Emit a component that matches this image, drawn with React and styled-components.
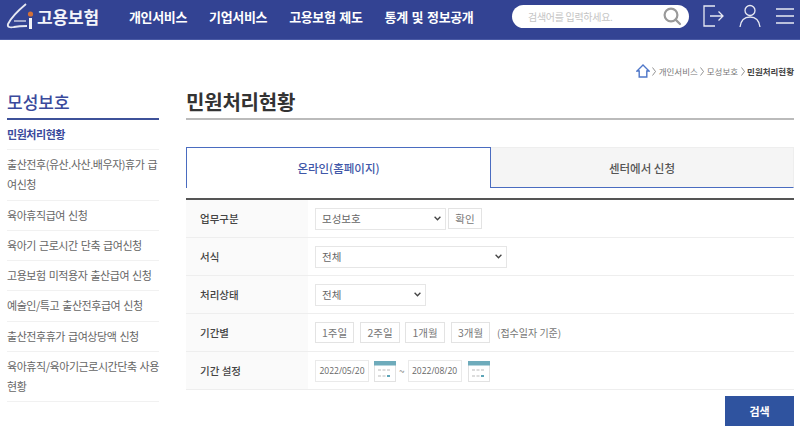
import React from "react";
import styled, { createGlobalStyle } from "styled-components";

const Global = createGlobalStyle`
  html, body { margin: 0; padding: 0; background: #fff; }
  body { font-family: "Noto Sans CJK KR", "Noto Sans", sans-serif; color: #444; overflow: hidden; }
  * { box-sizing: border-box; }
`;

const chevron = "data:image/svg+xml;utf8,<svg xmlns='http://www.w3.org/2000/svg' width='7' height='5' viewBox='0 0 7 5'><path d='M0.6 0.8 L3.5 3.8 L6.4 0.8' fill='none' stroke='%23444' stroke-width='1.3'/></svg>";

const Page = styled.div`width: 800px; height: 440px; overflow: hidden;`;
const Header = styled.header`
  height: 40px; background: #334393; border-bottom: 1px solid #4a5aa5;
  display: flex; align-items: center; padding-left: 6px;
`;
const Logo = styled.div`display: flex; align-items: center; width: 123px; color: #f4f5fa; font-size: 17px; font-weight: 700; gap: 2px; margin-top: -6px; letter-spacing: -0.1px;`;
const Nav = styled.nav`display: flex; gap: 22px; width: 383px; margin-top: -6px;`;
const NavItem = styled.a`color: #fff; font-size: 13px; font-weight: 700; white-space: nowrap; letter-spacing: -0.35px; word-spacing: 1.2px;`;
const Search = styled.div`
  width: 177px; height: 23px; border-radius: 12px; background: #fff; margin-top: -7px;
  display: flex; align-items: center; justify-content: space-between; padding: 0 7px 0 16px;
  color: #c4c4c4; font-size: 10px; letter-spacing: -0.3px;
`;
const HeaderIcons = styled.div`display: flex; align-items: center; gap: 15px; margin-left: 14px; margin-top: -7px;`;

const Crumbs = styled.div`
  display: flex; justify-content: flex-end; align-items: center; height: 20px; margin-top: 21px; padding-right: 6px;
  font-size: 8.5px; color: #777; gap: 2.5px;
`;
const CrumbNow = styled.strong`color: #444; font-weight: 700;`;

const Body = styled.div`display: flex; gap: 27px; padding: 0 6px 0 7px; margin-top: 8px;`;
const Side = styled.aside`width: 152px; flex: none;`;
const SideTitle = styled.h2`
  margin: 0; height: 31px; border-bottom: 2px solid #3e5199; color: #3a4a9c;
  font-size: 17px; font-weight: 500; line-height: 26px;
`;
const SideItem = styled.a`
  display: block; padding: 4px 0 5.3px; font-size: 11px; line-height: 20px; border-bottom: 1px solid #f1f1f1;
  letter-spacing: -0.45px; word-spacing: 1px; word-break: break-all;
  color: ${p => (p.$active ? "#3a4a9c" : "#666")}; font-weight: ${p => (p.$active ? 700 : 400)};
`;
const Main = styled.main`flex: 1; min-width: 0;`;
const Title = styled.h1`
  margin: 0; height: 31px; border-bottom: 2px solid #bbb; color: #333;
  font-size: 20px; font-weight: 700; line-height: 26px; letter-spacing: -0.2px;
`;
const Tabs = styled.div`display: flex; margin-top: 27px; height: 41px;`;
const Tab = styled.div`
  flex: none; width: ${p => (p.$active ? "305px" : "303px")};
  display: flex; align-items: center; justify-content: center; font-size: 11.5px; font-weight: 500;
  ${p => p.$active
    ? "color:#3f57a8; border:1px solid #4a6cc0; border-bottom:0; background:#fff;"
    : "color:#555; background:#f5f5f5; border-top:1px solid #eee; border-right:1px solid #eee; border-bottom:1px solid #4a6cc0;"}
`;
const Form = styled.div`margin-top: 10px; border-top: 2px solid #555;`;
const Row = styled.div`display: flex; height: 38px; border-bottom: 1px solid #eee; align-items: stretch;`;
const Head = styled.div`
  width: 122px; background: #fafafa; padding-left: 14px; display: flex; align-items: center;
  font-size: 10.5px; font-weight: 500; color: #444;
`;
const Cell = styled.div`flex: 1; display: flex; align-items: center; padding-left: 7px; font-size: 10px; color: #666;`;
const Select = styled.select`
  appearance: none; width: ${p => p.$w}px; height: 22px; border: 1px solid #e6e6e6; color: #666;
  background: #fff url("${chevron}") no-repeat right 4px center;
  font-family: inherit; font-size: 10.5px; padding: 0 1px 0 6px;
`;
const Btn = styled.button`
  height: 21px; width: ${p => p.$w}px; margin-left: ${p => p.$ml ?? 0}px; padding: 0; border: 1px solid #e3e3e3; background: #fff;
  color: #777; font-family: inherit; font-size: 10.5px;
`;
const Note = styled.span`margin-left: 7px; font-size: 10px; color: #777;`;
const DateBox = styled.input`
  width: 54px; height: 22px; border: 1px solid #eaeaea; padding: 0; text-align: center; color: #666;
  font-family: "Open Sans", sans-serif; font-size: 8.5px; background: #fff;
`;
const Tilde = styled.span`margin: 0 3px; color: #888; font-size: 10px;`;
const Spacer = styled.span`width: ${p => p.$w}px; flex: none;`;
const Actions = styled.div`display: flex; justify-content: flex-end; margin-top: 6px;`;
const SearchBtn = styled.button`
  width: 69px; height: 30px; border: 0; background: #2f539f; color: #fff;
  font-family: inherit; font-size: 11px; font-weight: 700;
`;

const LogoMark = () => (
  <svg width="29" height="28" viewBox="0 0 29 28" fill="none">
    <path d="M20 1 C14 6 6 13 2 21 C1 24 4 25 8 24 C13 23 17 23 21 23" stroke="#e6e8f2" strokeWidth="1.8" />
    <path d="M8 18 C12 18 15 18 20 18" stroke="#e6e8f2" strokeWidth="1.2" />
    <circle cx="24.5" cy="11" r="2.6" fill="#d2703a" />
    <rect x="23" y="15" width="3" height="11" fill="#f2f2f6" />
  </svg>
);
const Magnifier = () => (
  <svg width="20" height="20" viewBox="0 0 20 20" fill="none" stroke="#9a9a9a" strokeWidth="2.2">
    <circle cx="9" cy="9" r="6.4" /><path d="M13.6 13.6 L18 18" strokeLinecap="round" />
  </svg>
);
const ExitIcon = () => (
  <svg width="21" height="22" viewBox="0 0 21 22" fill="none" stroke="#e8eaf3" strokeWidth="1.3">
    <path d="M12 1 H1 V21 H12" /><path d="M7 11 H20 M15.5 6.5 L20 11 L15.5 15.5" />
  </svg>
);
const UserIcon = () => (
  <svg width="22" height="24" viewBox="0 0 22 24" fill="none" stroke="#e8eaf3" strokeWidth="1.3">
    <circle cx="11" cy="6.5" r="5" /><path d="M1 23 C2 15 6 13 11 13 C16 13 20 15 21 23" />
  </svg>
);
const MenuIcon = () => (
  <svg width="18" height="18" viewBox="0 0 18 18" stroke="#e8eaf3" strokeWidth="1.3"><path d="M0 2 H18 M0 9 H18 M0 16 H18" /></svg>
);
const HomeIcon = () => (
  <svg width="14" height="14" viewBox="0 0 14 14" fill="none" stroke="#4f77c9" strokeWidth="1.4">
    <path d="M1 7 L7 1 L13 7 H10.8 V13 H3.2 V7 Z" />
  </svg>
);
const CrumbSep = () => (
  <svg width="4" height="9" viewBox="0 0 4 9" fill="none" stroke="#777" strokeWidth="0.8"><path d="M0.5 0.5 L3.5 4.5 L0.5 8.5" /></svg>
);
const CalIcon = () => (
  <svg width="22" height="22" viewBox="0 0 22 22" style={{ flex: "none" }}>
    <rect x="0.5" y="1.5" width="21" height="20" fill="#fff" stroke="#e2e2e2" />
    <rect y="1" width="22" height="4.5" fill="#6eabbb" />
    {[4, 8.5, 13].map(x => [9, 15].map(y => <rect key={x + "-" + y} x={x} y={y} width="3" height="2" fill="#dcdcdc" />))}
    <rect x="13" y="15" width="3" height="2" fill="#5ea5b8" />
  </svg>
);

const sideItems = [
  "출산전후(유산.사산.배우자)휴가 급여신청",
  "육아휴직급여 신청",
  "육아기 근로시간 단축 급여신청",
  "고용보험 미적용자 출산급여 신청",
  "예술인/특고 출산전후급여 신청",
  "출산전후휴가 급여상당액 신청",
  "육아휴직/육아기근로시간단축 사용현황",
];

export default function App() {
  return (
    <Page>
      <Global />
      <Header>
        <Logo><LogoMark />고용보험</Logo>
        <Nav>
          {["개인서비스", "기업서비스", "고용보험 제도", "통계 및 정보공개"].map(n => <NavItem key={n}>{n}</NavItem>)}
        </Nav>
        <Search>검색어를 입력하세요.<Magnifier /></Search>
        <HeaderIcons><ExitIcon /><UserIcon /><MenuIcon /></HeaderIcons>
      </Header>
      <Crumbs>
        <HomeIcon /><CrumbSep />개인서비스<CrumbSep />모성보호<CrumbSep /><CrumbNow>민원처리현황</CrumbNow>
      </Crumbs>
      <Body>
        <Side>
          <SideTitle>모성보호</SideTitle>
          <SideItem $active>민원처리현황</SideItem>
          {sideItems.map(s => <SideItem key={s}>{s}</SideItem>)}
        </Side>
        <Main>
          <Title>민원처리현황</Title>
          <Tabs>
            <Tab $active>온라인(홈페이지)</Tab>
            <Tab>센터에서 신청</Tab>
          </Tabs>
          <Form>
            <Row>
              <Head>업무구분</Head>
              <Cell><Select $w={131}><option>모성보호</option></Select><Btn $w={34} $ml={2}>확인</Btn></Cell>
            </Row>
            <Row>
              <Head>서식</Head>
              <Cell><Select $w={192}><option>전체</option></Select></Cell>
            </Row>
            <Row>
              <Head>처리상태</Head>
              <Cell><Select $w={111}><option>전체</option></Select></Cell>
            </Row>
            <Row>
              <Head>기간별</Head>
              <Cell>
                <Btn $w={39}>1주일</Btn><Btn $w={40} $ml={6}>2주일</Btn><Btn $w={40} $ml={5}>1개월</Btn><Btn $w={39} $ml={6}>3개월</Btn>
                <Note>(접수일자 기준)</Note>
              </Cell>
            </Row>
            <Row>
              <Head>기간 설정</Head>
              <Cell>
                <DateBox readOnly value="2022/05/20" /><Spacer $w={5} /><CalIcon /><Tilde>~</Tilde>
                <DateBox readOnly value="2022/08/20" /><Spacer $w={6} /><CalIcon />
              </Cell>
            </Row>
          </Form>
          <Actions><SearchBtn>검색</SearchBtn></Actions>
        </Main>
      </Body>
    </Page>
  );
}
